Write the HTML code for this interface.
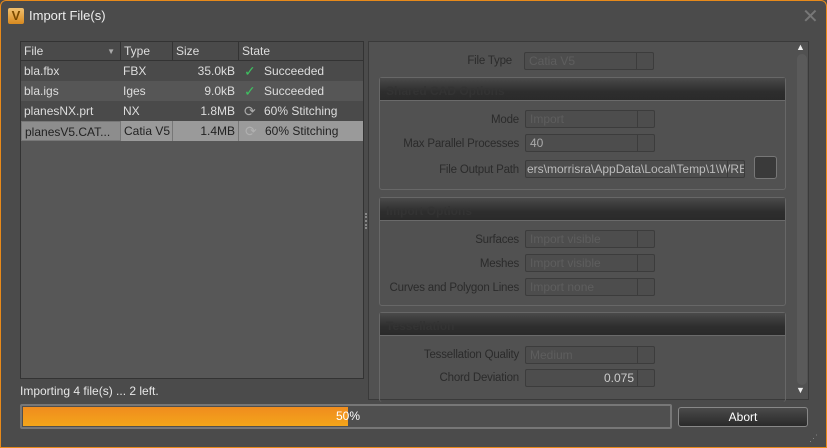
<!DOCTYPE html>
<html><head><style>
*{box-sizing:border-box;margin:0;padding:0}
body{width:827px;height:448px;overflow:hidden;background:#4b4b4b;font-family:"Liberation Sans",sans-serif;font-size:12px;color:#ddd;position:relative}
.win{position:absolute;left:0;top:0;width:827px;height:448px;border:1px solid #e88a1a;border-radius:6px 6px 0 0;background:#4b4b4b}
.abs{position:absolute}
.table{left:19px;top:40px;width:344px;height:338px;background:#575757;border:1px solid #333}
.hdr{position:absolute;top:0;left:0;right:0;height:19px;background:#4a4a4a;border-bottom:1px solid #333}
.hdr div,.row div{position:absolute;top:0;height:100%;line-height:19px;padding-left:3px;white-space:nowrap}
.row{position:absolute;left:0;right:0;height:20px}
.row div{line-height:20px}
.c1{left:0;width:100px}.c2{left:99px;width:52px;border-left:1px solid #333}.c3{left:151px;width:66px;border-left:1px solid #333;text-align:right;padding-right:3px}.c4{left:217px;width:127px;border-left:1px solid #333;padding-left:26px!important}
.hdr .c3{text-align:left}.hdr .c4{padding-left:3px!important}
.right{left:367px;top:40px;width:441px;height:359px;background:#515151;border:1px solid #3a3a3a}
.lbl{position:absolute;text-align:right;color:#2b2b2b;font-size:11.5px;white-space:nowrap;letter-spacing:-0.2px}
.cb{position:absolute;height:18px;width:130px;background:#4d4d4d;border:1px solid #3c3c3c;border-radius:2px;color:#5e5e5e;padding-left:4px;line-height:16px;white-space:nowrap}
.cb:after{content:"";position:absolute;right:16px;top:0;bottom:0;border-left:1px solid #3c3c3c}
.grp{position:absolute;left:10px;width:407px;border:1px solid #676767;border-radius:3px}
.gh{height:23px;background:linear-gradient(#4a4a4a,#2e2e2e 60%,#2a2a2a);border-bottom:1px solid #6a6a6a;color:#333;font-weight:bold;font-size:12px;padding-left:6px;line-height:26px}
</style></head><body><div class="win">
<div class="abs" style="left:7px;top:7px;width:16px;height:16px;background:linear-gradient(#f0c070,#d88a20);border-radius:2px;color:#7a4a00;font-weight:bold;font-size:13px;line-height:16px;text-align:center">V</div>
<div class="abs" style="left:28px;top:7px;font-size:13px;color:#eee">Import File(s)</div>
<div class="abs" style="left:801px;top:6px;font-size:20px;color:#777;line-height:20px">✕</div>

<div class="abs table">
<div class="hdr"><div class="c1">File <span style="position:absolute;right:6px;font-size:8px;color:#aaa">▼</span></div><div class="c2">Type</div><div class="c3">Size</div><div class="c4">State</div></div>
<div class="row" style="top:19px;background:#4a4a4a"><div class="c1">bla.fbx</div><div class="c2" style="border:0">FBX</div><div class="c3" style="border:0">35.0kB</div><div class="c4" style="border:0"><span style="position:absolute;left:6px;color:#3ec060;font-size:14px">✓</span>Succeeded</div></div>
<div class="row" style="top:39px;background:#565656"><div class="c1">bla.igs</div><div class="c2" style="border:0">Iges</div><div class="c3" style="border:0">9.0kB</div><div class="c4" style="border:0"><span style="position:absolute;left:6px;color:#3ec060;font-size:14px">✓</span>Succeeded</div></div>
<div class="row" style="top:59px;background:#4a4a4a"><div class="c1">planesNX.prt</div><div class="c2" style="border:0">NX</div><div class="c3" style="border:0">1.8MB</div><div class="c4" style="border:0"><span style="position:absolute;left:6px;color:#aaa;font-size:14px">⟳</span>60% Stitching</div></div>
<div class="row" style="top:79px;background:#9a9a9a;color:#222"><div class="c1" style="background:#8d8d8d;border:1px solid #777">planesV5.CAT...</div><div class="c2" style="border-color:#777">Catia V5</div><div class="c3" style="border-color:#777">1.4MB</div><div class="c4" style="border-color:#777"><span style="position:absolute;left:6px;color:#b0b0b0;font-size:14px">⟳</span>60% Stitching</div></div>
</div>
<div class="abs" style="left:19px;top:383px;color:#e6e6e6">Importing 4 file(s) ... 2 left.</div>
<div class="abs" style="left:364px;top:212px;width:2px;height:16px;border-left:2px dotted #888"></div>

<div class="abs right">
<div class="lbl" style="left:60px;width:83px;top:13px">File Type</div>
<div class="cb" style="left:155px;top:10px">Catia V5</div>
<div class="grp" style="top:35px;height:113px"><div class="gh">Shared CAD Options</div>
<div class="lbl" style="left:0;width:139px;top:36px">Mode</div><div class="cb" style="left:145px;top:32px">Import</div>
<div class="lbl" style="left:0;width:139px;top:60px">Max Parallel Processes</div><div class="cb" style="left:145px;top:56px;color:#aaa">40</div>
<div class="lbl" style="left:0;width:139px;top:86px">File Output Path</div><div class="cb" style="left:145px;top:82px;width:220px;color:#bbb;padding-left:1px;overflow:hidden">ers\morrisra\AppData\Local\Temp\1\WREDPro</div>
<div class="abs" style="left:374px;top:78px;width:23px;height:23px;background:#3a3a3a;border:1px solid #777;border-radius:3px"></div>
</div>
<div class="grp" style="top:155px;height:109px"><div class="gh">Import Options</div>
<div class="lbl" style="left:0;width:139px;top:36px">Surfaces</div><div class="cb" style="left:145px;top:32px">Import visible</div>
<div class="lbl" style="left:0;width:139px;top:60px">Meshes</div><div class="cb" style="left:145px;top:56px">Import visible</div>
<div class="lbl" style="left:0;width:139px;top:84px">Curves and Polygon Lines</div><div class="cb" style="left:145px;top:80px">Import none</div>
</div>
<div class="grp" style="top:270px;height:90px;border-bottom:0"><div class="gh">Tessellation</div>
<div class="lbl" style="left:0;width:139px;top:36px">Tessellation Quality</div><div class="cb" style="left:145px;top:33px">Medium</div>
<div class="lbl" style="left:0;width:139px;top:59px">Chord Deviation</div><div class="cb" style="left:145px;top:56px;text-align:right;padding-right:20px;color:#ccc">0.075</div>
</div>
<div class="abs" style="left:425px;top:0;width:14px;height:357px;background:#515151"></div>
<div class="abs" style="left:428px;top:12px;width:10px;height:331px;background:#5a5a5a;border-radius:5px"></div>
<div class="abs" style="left:427px;top:0;color:#eee;font-size:9px">▲</div>
<div class="abs" style="left:427px;top:343px;color:#eee;font-size:9px">▼</div>
</div>

<div class="abs" style="left:19px;top:403px;width:652px;height:25px;border:2px solid #777;border-radius:2px;background:#4f4f4f">
<div class="abs" style="left:1px;top:1px;width:325px;height:19px;background:linear-gradient(#f08c1e,#f3a51a)"></div>
<div class="abs" style="left:314px;top:3px;color:#fff">50%</div></div>
<div class="abs" style="left:677px;top:406px;width:130px;height:20px;border:1px solid #888;border-radius:3px;background:linear-gradient(#4a4a4a,#2a2a2a);color:#fff;text-align:center;line-height:18px">Abort</div>
<div class="abs" style="left:808px;top:432px;color:#888;font-size:9px">⋰</div>
</div></body></html>
